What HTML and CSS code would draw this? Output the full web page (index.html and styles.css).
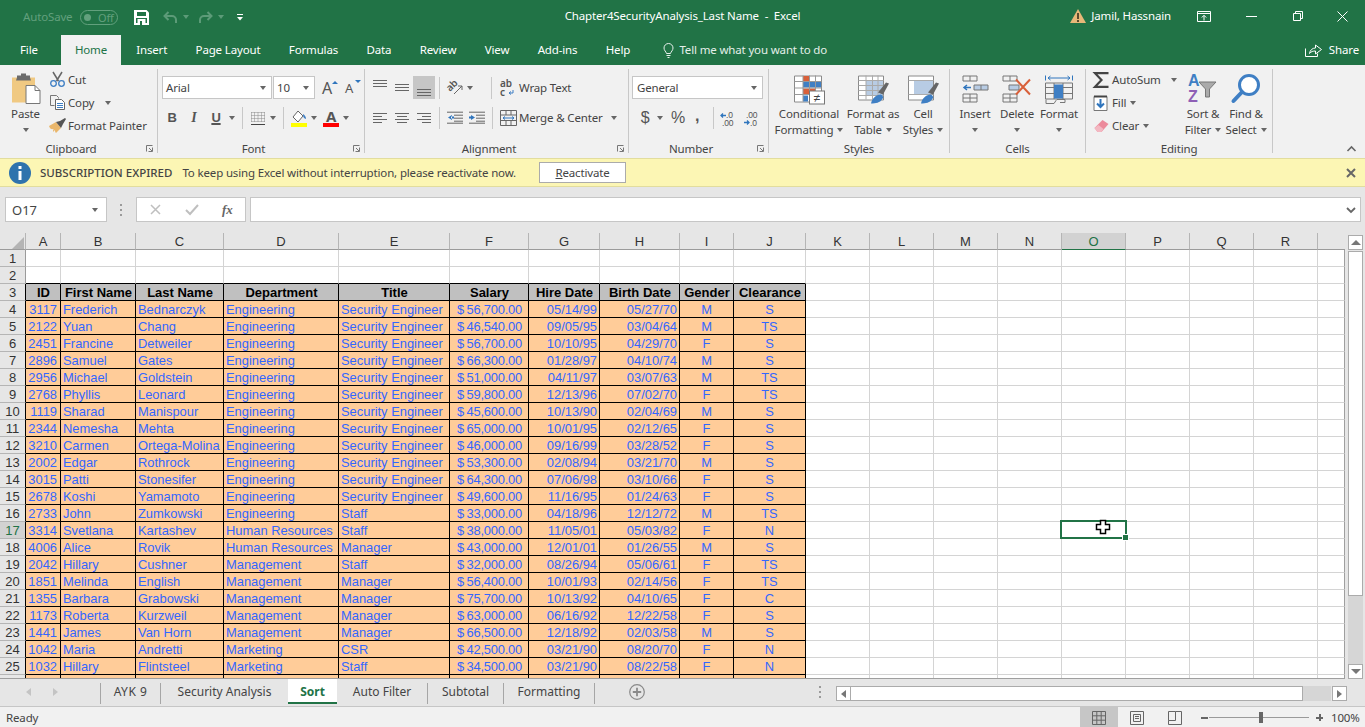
FILE: index.html
```html
<!DOCTYPE html>
<html lang="en">
<head>
<meta charset="utf-8">
<title>Chapter4SecurityAnalysis_Last Name - Excel</title>
<link rel="stylesheet" href="styles.css">
</head>
<body>
<header class="titlebar">
  <div class="qat">
    <span class="autosave">AutoSave</span>
    <span class="toggle"><i></i>Off</span>
    <svg class="ic-save" width="15" height="15" viewBox="0 0 15 15"><path d="M0 0h12.500L15 2.500V15H0z" fill="#fff"/><rect x="3" y="2" width="9" height="4" fill="#217346"/><rect x="2" y="8" width="11" height="5" fill="#217346"/><rect x="3.500" y="9" width="8" height="6" fill="#fff"/><rect x="6" y="11" width="2" height="4" fill="#217346"/></svg>
    <svg class="ic-undo" width="15" height="13" viewBox="0 0 15 13"><path d="M5.500 1 1.500 5l4 4M2 5h7a4 4 0 0 1 4 4v3" fill="none" stroke="#5c9b78" stroke-width="2"/></svg>
    <i class="caret dim m-c1"></i>
    <svg class="ic-redo" width="15" height="13" viewBox="0 0 15 13"><path d="M9.500 1l4 4-4 4M13 5H6a4 4 0 0 0-4 4v3" fill="none" stroke="#5c9b78" stroke-width="2"/></svg>
    <i class="caret dim m-c1"></i>
    <svg class="ic-qat" width="8" height="8" viewBox="0 0 8 8"><path d="M1 1.500h6" stroke="#fff"/><path d="M1 4h6L4 7.500z" fill="#fff"/></svg>
  </div>
  <div class="doc-title">Chapter4SecurityAnalysis_Last Name &nbsp;-&nbsp; Excel</div>
  <div class="win">
    <svg class="ic-warn" width="16" height="14" viewBox="0 0 16 14"><path d="M8 0l8 14H0z" fill="#e8b878"/><path d="M7 4h2v6H7zM7 11h2v2H7z" fill="#5b4a2c"/></svg>
    <span class="user">Jamil, Hassnain</span>
    <svg class="ic-disp" width="14" height="11" viewBox="0 0 14 11"><path d="M.5.500h13v10H.500zM.5 2.500h13" fill="none" stroke="#fff"/><path d="M7 9.500V4.500M4.800 6.500 7 4.300l2.200 2.200" fill="none" stroke="#fff"/></svg>
    <svg class="ic-min" width="11" height="1" viewBox="0 0 11 1"><path d="M0 .5h11" stroke="#fff"/></svg>
    <svg class="ic-res" width="10" height="10" viewBox="0 0 10 10"><path d="M.5 2.500h7v7h-7zM2.500 2.500v-2h7v7h-2" fill="none" stroke="#fff"/></svg>
    <svg class="ic-close" width="11" height="11" viewBox="0 0 11 11"><path d="M.5.500l10 10M10.500.500l-10 10" stroke="#fff"/></svg>
  </div>
</header>

<nav class="tabs">
  <span class="tab file">File</span>
  <span class="tab home">Home</span>
  <span class="tab">Insert</span>
  <span class="tab">Page Layout</span>
  <span class="tab">Formulas</span>
  <span class="tab">Data</span>
  <span class="tab">Review</span>
  <span class="tab">View</span>
  <span class="tab">Add-ins</span>
  <span class="tab">Help</span>
  <span class="tellme">
    <svg width="11" height="15" viewBox="0 0 11 15"><path d="M3.500 10.500C3 8.500 1 7.500 1 5a4.500 4.500 0 0 1 9 0c0 2.500-2 3.500-2.500 5.500zM3.500 12.500h4M4.500 14.500h2" fill="none" stroke="#e8f1ec"/></svg>
    Tell me what you want to do
  </span>
  <span class="share">
    <svg width="17" height="13" viewBox="0 0 17 13"><path d="M.5 4.500v8h12v-3" fill="none" stroke="#fff"/><path d="M4.500 9.500C5 6 7.500 4 10.500 4V1l6 4.500-6 4.500V7C8 7 6 7.500 4.500 9.500z" fill="none" stroke="#fff"/></svg>
    Share
  </span>
</nav>

<section class="ribbon">
  <div class="group g-clip">
    <div class="body">
      <div class="big paste">
        <svg class="bigic" width="30" height="31" viewBox="0 0 30 31"><path d="M1 4h23v25H1z" fill="#f0c982"/><path d="M6 4V2h4V0h5v2h4v2l1 3H5z" fill="#6b6b6b"/><path d="M15 12h9l5 5v13H15z" fill="#fff" stroke="#777"/><path d="M24 12v5h5" fill="none" stroke="#777"/></svg>
        <span>Paste</span><i class="caret"></i>
      </div>
      <div class="smalls">
        <div class="srow"><svg width="15" height="15" viewBox="0 0 15 15"><path d="M3 0l5.500 9M12 0L6.500 9" stroke="#666" stroke-width="1.500" fill="none"/><circle cx="3.500" cy="11.500" r="2.800" fill="none" stroke="#3f7fc4" stroke-width="1.300"/><circle cx="11.500" cy="11.500" r="2.800" fill="none" stroke="#3f7fc4" stroke-width="1.300"/></svg><span>Cut</span></div>
        <div class="srow"><svg width="15" height="15" viewBox="0 0 15 15"><path d="M.5.500h6l2 2v1M.5.500v10h4" fill="none" stroke="#777"/><path d="M5.500 4.500h6l3 3v7h-9z" fill="#fff" stroke="#666"/><path d="M7 8.500h6M7 10.500h6M7 12.500h6" stroke="#3f7fc4"/></svg><span>Copy</span><i class="caret m-copy"></i></div>
        <div class="srow"><svg width="17" height="15" viewBox="0 0 17 15"><path d="M0 8l7-4 5 6-5 5c-1-1-1-2-1-3l-2 2c0-1 0-2 .5-3-2 .5-3.500 0-4.500-3z" fill="#eab76c"/><path d="M7 4l4-1 5-3 1 1-3 5-2 4z" fill="#555"/></svg><span>Format Painter</span></div>
      </div>
    </div>
    <div class="label">Clipboard</div>
    <svg class="launch" width="7" height="7" viewBox="0 0 7 7"><path d="M.5 6.500v-6h6M6.500 2.500v4h-4M3 3l3 3" fill="none" stroke="#777"/></svg>
  </div>

  <div class="group g-font">
    <div class="body col">
      <div class="row r1">
        <span class="select s-font">Arial<i class="caret"></i></span>
        <span class="select s-size">10<i class="caret"></i></span>
        <span class="grow up">A<i></i></span>
        <span class="grow down">A<i></i></span>
      </div>
      <div class="row r2">
        <b class="fb">B</b><em class="fb">I</em><u class="fb">U</u><i class="caret m2"></i>
        <i class="sep m7"></i>
        <svg class="m8" width="14" height="13" viewBox="0 0 14 13"><path d="M.5.500h13M.5 6.500h13M.5 3.500h13M.5 9.500h13M.5.500v9M3.500.500v9M7 .500v9M10.500.500v9M13.500.500v9" stroke="#8a8a8a" stroke-dasharray="1 1" fill="none"/><path d="M0 12.500h14" stroke="#444"/></svg>
        <i class="caret m5"></i>
        <i class="sep m7"></i>
        <svg class="m7" width="16" height="18" viewBox="0 0 16 18"><path d="M2 8l5-6 5 5-5 6z" fill="#fff" stroke="#666"/><path d="M12 5c2 1 3 3 3 5-1.500-.5-3-1-3-5z" fill="#3f7fc4"/><rect y="14" width="16" height="4" fill="#ffff00"/></svg>
        <i class="caret m4"></i>
        <span class="fcolor m6">A<i></i></span>
        <i class="caret m4"></i>
      </div>
    </div>
    <div class="label">Font</div>
    <svg class="launch" width="7" height="7" viewBox="0 0 7 7"><path d="M.5 6.500v-6h6M6.500 2.500v4h-4M3 3l3 3" fill="none" stroke="#777"/></svg>
  </div>

  <div class="group g-align">
    <div class="body col">
      <div class="row r1">
        <svg class="m0" width="14" height="23" viewBox="0 0 14 23"><path d="M0 4.500h14M0 7.500h14M0 10.500h14" stroke="#666"/></svg>
        <svg class="m8" width="14" height="23" viewBox="0 0 14 23"><path d="M0 8.500h14M0 11.500h14M0 14.500h14" stroke="#666"/></svg>
        <span class="pressed"><svg width="14" height="23" viewBox="0 0 14 23"><path d="M0 13.500h14M0 16.500h14M0 19.500h14" stroke="#666"/></svg></span>
        <i class="sep m4"></i>
        <svg class="m7" width="17" height="18" viewBox="0 0 17 18"><text x="0" y="10" class="svgt" transform="rotate(-45 5 8)">ab</text><path d="M7 15 15 7M15 7v4M15 7h-4" stroke="#666" fill="none"/></svg>
        <i class="caret m3"></i>
        <i class="sep m18"></i>
        <svg class="m8" width="16" height="18" viewBox="0 0 16 18"><text x="0" y="8" class="svgt">ab</text><text x="0" y="17" class="svgt">c</text><path d="M13 11v3H9M11 12.500 9 14l2 1.500" fill="none" stroke="#3f7fc4"/></svg>
        <span class="txt m3">Wrap Text</span>
      </div>
      <div class="row r2">
        <svg class="m0" width="14" height="12" viewBox="0 0 14 12"><path d="M0 1.500h14M0 4.500h9M0 7.500h14M0 10.500h9" stroke="#666"/></svg>
        <svg class="m8" width="14" height="12" viewBox="0 0 14 12"><path d="M0 1.500h14M2 4.500h10M0 7.500h14M2 10.500h10" stroke="#666"/></svg>
        <svg class="m8" width="14" height="12" viewBox="0 0 14 12"><path d="M0 1.500h14M5 4.500h9M0 7.500h14M5 10.500h9" stroke="#666"/></svg>
        <i class="sep m8"></i>
        <svg class="m7" width="16" height="12" viewBox="0 0 16 12"><path d="M0 .5h16M7 3.500h9M7 6.500h9M7 9.500h9M0 11.500h16" stroke="#666" transform="translate(0 -.3)"/><path d="M5 3 1 5.500 5 8zM4 4.500h3v2H4z" fill="#2f75bd"/></svg>
        <svg class="m6" width="16" height="12" viewBox="0 0 16 12"><path d="M0 .5h16M7 3.500h9M7 6.500h9M7 9.500h9M0 11.500h16" stroke="#666" transform="translate(0 -.3)"/><path d="M2 3l4 2.500L2 8zM0 4.500h3v2H0z" fill="#2f75bd"/></svg>
        <i class="sep m7"></i>
        <svg class="m7" width="17" height="16" viewBox="0 0 17 16"><path d="M.5.500h16v15H.500zM.5 5h16M.5 10.500h16M6 .500V5M11 .500V5M6 10.500v5M11 10.500v5" fill="none" stroke="#666"/><path d="M3 8h11M3 8l2-1.500M3 8l2 1.500M14 8l-2-1.500M14 8l-2 1.500" fill="none" stroke="#2f75bd"/></svg>
        <span class="txt m2">Merge &amp; Center</span>
        <i class="caret m8"></i>
      </div>
    </div>
    <div class="label">Alignment</div>
    <svg class="launch" width="7" height="7" viewBox="0 0 7 7"><path d="M.5 6.500v-6h6M6.500 2.500v4h-4M3 3l3 3" fill="none" stroke="#777"/></svg>
  </div>

  <div class="group g-num">
    <div class="body col">
      <div class="row r1"><span class="select s-num">General<i class="caret"></i></span></div>
      <div class="row r2">
        <span class="sym dollar">$</span><i class="caret m7"></i>
        <span class="sym pct">%</span>
        <span class="sym comma">,</span>
        <i class="sep m12"></i>
        <svg class="m7" width="15" height="15" viewBox="0 0 15 15"><text x="5" y="7" class="svgn">.0</text><text x="1" y="15" class="svgn">.00</text><path d="M5 4.500H0M2 2.500l-2 2 2 2" fill="none" stroke="#2f75bd" stroke-width="1.300"/></svg>
        <svg class="m7" width="15" height="15" viewBox="0 0 15 15"><text x="3" y="7" class="svgn">.00</text><text x="7" y="15" class="svgn">.0</text><path d="M1 11.500h5M4 9.500l2 2-2 2" fill="none" stroke="#2f75bd" stroke-width="1.300"/></svg>
      </div>
    </div>
    <div class="label">Number</div>
    <svg class="launch" width="7" height="7" viewBox="0 0 7 7"><path d="M.5 6.500v-6h6M6.500 2.500v4h-4M3 3l3 3" fill="none" stroke="#777"/></svg>
  </div>

  <div class="group g-styles">
    <div class="body">
      <div class="big b-cond">
        <svg class="bigic" width="31" height="31" viewBox="0 0 31 31"><path d="M.5 2.500h27v26H.500z" fill="#fff" stroke="#8a8a8a"/><path d="M9 2.500h6v6H9z" fill="#d9603a"/><path d="M9 8h18v6H9z" fill="#3f7fc4"/><path d="M9 15h12v6H9z" fill="#d9603a"/><path d="M9 22h5v6H9z" fill="#3f7fc4"/><path d="M.5 8h27M.5 14.500h27M.5 21h27M9 2v26M15.500 2v26M21.500 2v26" stroke="#999" fill="none"/><rect x="15.500" y="17.500" width="15" height="13" fill="#fff" stroke="#777"/><text x="23" y="28" class="svgne">≠</text></svg>
        <span>Conditional</span><span>Formatting<i class="caret c-in"></i></span>
      </div>
      <div class="big b-table">
        <svg class="bigic" width="31" height="31" viewBox="0 0 31 31"><path d="M.5 2.500h25v24H.500z" fill="#fff" stroke="#8a8a8a"/><path d="M8 7h17v15H8z" fill="#b8cce4"/><path d="M.5 7h25M.5 12h25M.5 17h25M.5 22h25M8 2v24M14.500 2v24M20 2v24" stroke="#aaa" fill="none"/><path d="M20 19l8-10 3 1-6 11z" fill="#666"/><path d="M13 30c1-5 5-9 10-9 2 1 3 3 1 5-2 3-6 4-11 4z" fill="#3f7fc4"/></svg>
        <span>Format as</span><span>Table<i class="caret c-in"></i></span>
      </div>
      <div class="big b-cell">
        <svg class="bigic" width="31" height="31" viewBox="0 0 31 31"><path d="M.5 2.500h25v24H.500z" fill="#fff" stroke="#8a8a8a"/><path d="M6 7h19v14H6z" fill="#b8cce4"/><path d="M.5 7h25M.5 21h25" stroke="#aaa" fill="none"/><path d="M20 19l8-10 3 1-6 11z" fill="#666"/><path d="M13 30c1-5 5-9 10-9 2 1 3 3 1 5-2 3-6 4-11 4z" fill="#3f7fc4"/></svg>
        <span>Cell</span><span>Styles<i class="caret c-in"></i></span>
      </div>
    </div>
    <div class="label">Styles</div>
  </div>

  <div class="group g-cells">
    <div class="body">
      <div class="big">
        <svg class="bigic" width="27" height="27" viewBox="0 0 27 27"><path d="M1 .5h14v5H1zM8 .5v5M1 18.500h14v8H1zM1 22.500h14M8 18.500v8" fill="none" stroke="#777"/><path d="M12 9.500h14v5H12z" fill="#b8cce4" stroke="#777"/><path d="M19 9.500v5" stroke="#777"/><path d="M9 12H2M5 9.500 2 12l3 2.500" fill="none" stroke="#2f75bd" stroke-width="1.500"/></svg>
        <span>Insert</span><i class="caret"></i>
      </div>
      <div class="big">
        <svg class="bigic" width="30" height="27" viewBox="0 0 30 27"><path d="M1 .5h14v5H1zM8 .5v5M1 18.500h14v8H1zM1 22.500h14M8 18.500v8" fill="none" stroke="#777"/><path d="M7 9.500h10v5H7z" fill="#b8cce4" stroke="#777"/><path d="M14 4l14 15M28 4 14 19" stroke="#d9603a" stroke-width="2"/></svg>
        <span>Delete</span><i class="caret"></i>
      </div>
      <div class="big">
        <svg class="bigic" width="28" height="29" viewBox="0 0 28 29"><path d="M.5 1v5M27.500 1v5M3 3.500h22M3 3.500l2.500-2M3 3.500l2.500 2M25 3.500l-2.500-2M25 3.500l-2.500 2" fill="none" stroke="#2f75bd"/><path d="M.5 8.500h27v16H.500zM.5 13h27M.5 19h27M9 8.500v16M18 8.500v16" fill="none" stroke="#777"/><rect x="9" y="10" width="9" height="14" fill="#3f7fc4"/><path d="M1 25v4h8l2-3 1-1M12 25h8v3h-5" fill="none" stroke="#777"/></svg>
        <span>Format</span><i class="caret"></i>
      </div>
    </div>
    <div class="label">Cells</div>
  </div>

  <div class="group g-edit">
    <div class="body">
      <div class="smalls editcol">
        <div class="srow"><svg width="16" height="16" viewBox="0 0 16 16"><path d="M15 1.200H1.500L8 8l-6.500 6.800H15" fill="none" stroke="#444" stroke-width="2.200"/></svg><span>AutoSum</span><i class="caret m8"></i></div>
        <div class="srow"><svg width="16" height="16" viewBox="0 0 16 16"><path d="M.5 1.500h13v14H.500z" fill="#fff" stroke="#777"/><path d="M.5 1.500h13" stroke="#444" stroke-width="2"/><path d="M7 4v8M3.500 8.500 7 12l3.500-3.500" fill="none" stroke="#2f75bd" stroke-width="2"/></svg><span>Fill</span><i class="caret"></i></div>
        <div class="srow"><svg width="16" height="14" viewBox="0 0 16 14"><path d="M1 9l8-8 6 4-7 8H4z" fill="#ec8a9b"/><path d="M1 9l3 4h4l2-3-5-4z" fill="#f3b8c2"/></svg><span>Clear</span><i class="caret"></i></div>
      </div>
      <div class="big b-sort">
        <svg class="bigic" width="32" height="32" viewBox="0 0 32 32"><text x="1" y="13" class="svga">A</text><text x="1" y="29" class="svgz">Z</text><path d="M12 9h17l-6.500 7v8h-4v-8z" fill="#aaa" stroke="#777"/></svg>
        <span>Sort &amp;</span><span>Filter<i class="caret c-in"></i></span>
      </div>
      <div class="big b-find">
        <svg class="bigic" width="30" height="32" viewBox="0 0 30 32"><circle cx="18" cy="12" r="9.500" fill="#fff" stroke="#3f7fc4" stroke-width="3"/><path d="M11 19 2.500 28" stroke="#3f7fc4" stroke-width="4" stroke-linecap="round"/></svg>
        <span>Find &amp;</span><span>Select<i class="caret c-in"></i></span>
      </div>
    </div>
    <div class="label">Editing</div>
  </div>
  <svg class="collapse" width="9" height="6" viewBox="0 0 9 6"><path d="M.5 5 4.500 1l4 4" fill="none" stroke="#666" stroke-width="1.600"/></svg>
</section>

<section class="notice">
  <svg width="22" height="22" viewBox="0 0 22 22"><circle cx="11" cy="11" r="11" fill="#2f73ad"/><path d="M9.500 9h3v9h-3zM9.500 4h3v3h-3z" fill="#fff"/></svg>
  <strong>SUBSCRIPTION EXPIRED</strong>
  <span class="msg">To keep using Excel without interruption, please reactivate now.</span>
  <span class="react"><u>R</u>eactivate</span>
  <svg class="nclose" width="10" height="10" viewBox="0 0 10 10"><path d="M1 1l8 8M9 1 1 9" stroke="#666" stroke-width="2"/></svg>
</section>

<section class="fbar">
  <span class="namebox">O17<i class="caret"></i></span>
  <span class="grip"></span>
  <span class="fbtns">
    <svg width="11" height="11" viewBox="0 0 11 11"><path d="M1 1l9 9M10 1l-9 9" stroke="#bfbfbf" stroke-width="1.500"/></svg>
    <svg class="ok" width="14" height="11" viewBox="0 0 14 11"><path d="M1 6l4 4 8-9" fill="none" stroke="#bfbfbf" stroke-width="2"/></svg>
    <em class="fx">fx</em>
  </span>
  <span class="finput"><svg width="10" height="6" viewBox="0 0 10 6"><path d="M1 1l4 4 4-4" fill="none" stroke="#666" stroke-width="1.800"/></svg></span>
</section>

<main class="work">
  <div class="sheet">
    <table>
      <colgroup>
        <col class="c0"><col class="ca"><col class="cb"><col class="cc"><col class="cd"><col class="ce"><col class="cf"><col class="cg"><col class="ch"><col class="ci"><col class="cj">
        <col class="cx"><col class="cx"><col class="cx"><col class="cx"><col class="cx"><col class="cx"><col class="cx"><col class="cx"><col class="cs">
      </colgroup>
      <thead>
        <tr class="heads"><th class="corner"><svg width="12" height="12" viewBox="0 0 12 12"><path d="M12 0v12H0z" fill="#b4b4b4"/></svg></th><th>A</th><th>B</th><th>C</th><th>D</th><th>E</th><th>F</th><th>G</th><th>H</th><th>I</th><th>J</th><th>K</th><th>L</th><th>M</th><th>N</th><th class="sel">O</th><th>P</th><th>Q</th><th>R</th><th class="last"></th></tr>
      </thead>
      <tbody>
        <tr class="empty"><th>1</th><td></td><td></td><td></td><td></td><td></td><td></td><td></td><td></td><td></td><td></td><td class="blank" colspan="9"></td></tr>
        <tr class="empty above"><th>2</th><td></td><td></td><td></td><td></td><td></td><td></td><td></td><td></td><td></td><td></td><td class="blank" colspan="9"></td></tr>
        <tr class="titles"><th>3</th><td>ID</td><td>First Name</td><td>Last Name</td><td>Department</td><td>Title</td><td>Salary</td><td>Hire Date</td><td>Birth Date</td><td>Gender</td><td>Clearance</td><td class="blank" colspan="9"></td></tr>
        <tr class="data"><th>4</th><td>3117</td><td>Frederich</td><td>Bednarczyk</td><td>Engineering</td><td>Security Engineer</td><td>$ 56,700.00</td><td>05/14/99</td><td>05/27/70</td><td>M</td><td>S</td><td class="blank" colspan="9"></td></tr>
        <tr class="data"><th>5</th><td>2122</td><td>Yuan</td><td>Chang</td><td>Engineering</td><td>Security Engineer</td><td>$ 46,540.00</td><td>09/05/95</td><td>03/04/64</td><td>M</td><td>TS</td><td class="blank" colspan="9"></td></tr>
        <tr class="data"><th>6</th><td>2451</td><td>Francine</td><td>Detweiler</td><td>Engineering</td><td>Security Engineer</td><td>$ 56,700.00</td><td>10/10/95</td><td>04/29/70</td><td>F</td><td>S</td><td class="blank" colspan="9"></td></tr>
        <tr class="data"><th>7</th><td>2896</td><td>Samuel</td><td>Gates</td><td>Engineering</td><td>Security Engineer</td><td>$ 66,300.00</td><td>01/28/97</td><td>04/10/74</td><td>M</td><td>S</td><td class="blank" colspan="9"></td></tr>
        <tr class="data"><th>8</th><td>2956</td><td>Michael</td><td>Goldstein</td><td>Engineering</td><td>Security Engineer</td><td>$ 51,000.00</td><td>04/11/97</td><td>03/07/63</td><td>M</td><td>TS</td><td class="blank" colspan="9"></td></tr>
        <tr class="data"><th>9</th><td>2768</td><td>Phyllis</td><td>Leonard</td><td>Engineering</td><td>Security Engineer</td><td>$ 59,800.00</td><td>12/13/96</td><td>07/02/70</td><td>F</td><td>TS</td><td class="blank" colspan="9"></td></tr>
        <tr class="data"><th>10</th><td>1119</td><td>Sharad</td><td>Manispour</td><td>Engineering</td><td>Security Engineer</td><td>$ 45,600.00</td><td>10/13/90</td><td>02/04/69</td><td>M</td><td>S</td><td class="blank" colspan="9"></td></tr>
        <tr class="data"><th>11</th><td>2344</td><td>Nemesha</td><td>Mehta</td><td>Engineering</td><td>Security Engineer</td><td>$ 65,000.00</td><td>10/01/95</td><td>02/12/65</td><td>F</td><td>S</td><td class="blank" colspan="9"></td></tr>
        <tr class="data"><th>12</th><td>3210</td><td>Carmen</td><td>Ortega-Molina</td><td>Engineering</td><td>Security Engineer</td><td>$ 46,000.00</td><td>09/16/99</td><td>03/28/52</td><td>F</td><td>S</td><td class="blank" colspan="9"></td></tr>
        <tr class="data"><th>13</th><td>2002</td><td>Edgar</td><td>Rothrock</td><td>Engineering</td><td>Security Engineer</td><td>$ 53,300.00</td><td>02/08/94</td><td>03/21/70</td><td>M</td><td>S</td><td class="blank" colspan="9"></td></tr>
        <tr class="data"><th>14</th><td>3015</td><td>Patti</td><td>Stonesifer</td><td>Engineering</td><td>Security Engineer</td><td>$ 64,300.00</td><td>07/06/98</td><td>03/10/66</td><td>F</td><td>S</td><td class="blank" colspan="9"></td></tr>
        <tr class="data"><th>15</th><td>2678</td><td>Koshi</td><td>Yamamoto</td><td>Engineering</td><td>Security Engineer</td><td>$ 49,600.00</td><td>11/16/95</td><td>01/24/63</td><td>F</td><td>S</td><td class="blank" colspan="9"></td></tr>
        <tr class="data"><th>16</th><td>2733</td><td>John</td><td>Zumkowski</td><td>Engineering</td><td>Staff</td><td>$ 33,000.00</td><td>04/18/96</td><td>12/12/72</td><td>M</td><td>TS</td><td class="blank" colspan="9"></td></tr>
        <tr class="data"><th class="sel">17</th><td>3314</td><td>Svetlana</td><td>Kartashev</td><td>Human Resources</td><td>Staff</td><td>$ 38,000.00</td><td>11/05/01</td><td>05/03/82</td><td>F</td><td>N</td><td class="blank" colspan="9"></td></tr>
        <tr class="data"><th>18</th><td>4006</td><td>Alice</td><td>Rovik</td><td>Human Resources</td><td>Manager</td><td>$ 43,000.00</td><td>12/01/01</td><td>01/26/55</td><td>M</td><td>S</td><td class="blank" colspan="9"></td></tr>
        <tr class="data"><th>19</th><td>2042</td><td>Hillary</td><td>Cushner</td><td>Management</td><td>Staff</td><td>$ 32,000.00</td><td>08/26/94</td><td>05/06/61</td><td>F</td><td>TS</td><td class="blank" colspan="9"></td></tr>
        <tr class="data"><th>20</th><td>1851</td><td>Melinda</td><td>English</td><td>Management</td><td>Manager</td><td>$ 56,400.00</td><td>10/01/93</td><td>02/14/56</td><td>F</td><td>TS</td><td class="blank" colspan="9"></td></tr>
        <tr class="data"><th>21</th><td>1355</td><td>Barbara</td><td>Grabowski</td><td>Management</td><td>Manager</td><td>$ 75,700.00</td><td>10/13/92</td><td>04/10/65</td><td>F</td><td>C</td><td class="blank" colspan="9"></td></tr>
        <tr class="data"><th>22</th><td>1173</td><td>Roberta</td><td>Kurzweil</td><td>Management</td><td>Manager</td><td>$ 63,000.00</td><td>06/16/92</td><td>12/22/58</td><td>F</td><td>S</td><td class="blank" colspan="9"></td></tr>
        <tr class="data"><th>23</th><td>1441</td><td>James</td><td>Van Horn</td><td>Management</td><td>Manager</td><td>$ 66,500.00</td><td>12/18/92</td><td>02/03/58</td><td>M</td><td>S</td><td class="blank" colspan="9"></td></tr>
        <tr class="data"><th>24</th><td>1042</td><td>Maria</td><td>Andretti</td><td>Marketing</td><td>CSR</td><td>$ 42,500.00</td><td>03/21/90</td><td>08/20/70</td><td>F</td><td>N</td><td class="blank" colspan="9"></td></tr>
        <tr class="data"><th>25</th><td>1032</td><td>Hillary</td><td>Flintsteel</td><td>Marketing</td><td>Staff</td><td>$ 34,500.00</td><td>03/21/90</td><td>08/22/58</td><td>F</td><td>N</td><td class="blank" colspan="9"></td></tr>
        <tr class="data"><th></th><td></td><td></td><td></td><td></td><td></td><td></td><td></td><td></td><td></td><td></td><td class="blank" colspan="9"></td></tr>
      </tbody>
    </table>
    <div class="selection"><i></i></div>
    <svg class="cursor" width="16" height="16" viewBox="0 0 16 16"><path d="M5.500 1.500h5v4h4v5h-4v4h-5v-4h-4v-5h4z" fill="#fff" stroke="#000" stroke-width="1.500"/></svg>
  </div>
  <aside class="vscroll">
    <span class="sbtn"><i class="tri-up"></i></span>
    <span class="vthumb"></span>
    <span class="vtrack"></span>
    <span class="sbtn"><i class="tri-down"></i></span>
  </aside>
</main>

<footer class="sheetbar">
  <span class="nav"><i class="tri-l"></i><i class="tri-r"></i></span>
  <span class="stab">AYK 9</span>
  <span class="stab">Security Analysis</span>
  <span class="stab active">Sort</span>
  <span class="stab plain">Auto Filter</span>
  <span class="stab">Subtotal</span>
  <span class="stab">Formatting</span>
  <span class="add"><svg width="16" height="16" viewBox="0 0 16 16"><circle cx="8" cy="8" r="7.300" fill="none" stroke="#8a8a8a" stroke-width="1.200"/><path d="M8 3.800v8.400M3.800 8h8.400" stroke="#8a8a8a" stroke-width="1.800"/></svg></span>
  <span class="grip hgrip"></span>
  <span class="hscroll">
    <span class="hbtn"><i class="tri-l dark"></i></span>
    <span class="hthumb"></span>
    <span class="htrack"></span>
    <span class="hbtn"><i class="tri-r dark"></i></span>
  </span>
</footer>

<footer class="status">
  <span class="ready">Ready</span>
  <span class="views">
    <span class="view on"><svg width="14" height="14" viewBox="0 0 14 14"><path d="M.5.500h13v13H.500zM.5 4.800h13M.5 9.200h13M4.800.500v13M9.200.500v13" fill="none" stroke="#666"/></svg></span>
    <span class="view"><svg width="14" height="14" viewBox="0 0 14 14"><path d="M.5.500h13v13H.500z" fill="none" stroke="#666"/><path d="M3.500 3.500h7v7h-7zM5 5.500h4M5 7.500h4" fill="none" stroke="#666"/></svg></span>
    <span class="view"><svg width="14" height="14" viewBox="0 0 14 14"><path d="M.5 9.500v4h13V.500H7.500v9H.500V.500h7" fill="none" stroke="#666"/></svg></span>
  </span>
  <span class="zoom">
    <span class="zminus"></span>
    <span class="zslider"><i></i></span>
    <span class="zplus"></span>
    <span class="zval">100%</span>
  </span>
</footer>
</body>
</html>
```
FILE: styles.css
```css
* { box-sizing: border-box; }
html, body { margin: 0; padding: 0; }
body {
  width: 1365px;
  height: 727px;
  overflow: hidden;
  background: #e6e6e6;
  color: #444;
  font: 11.500px/16px "Noto Sans", "Open Sans", sans-serif;
  letter-spacing: -.15px;
}
i { display: inline-block; font-style: normal; }
svg { display: block; flex: none; overflow: visible; }

.caret {
  width: 0;
  height: 0;
  border-left: 3.5px solid transparent;
  border-right: 3.5px solid transparent;
  border-top: 4px solid #666;
  flex: none;
}
.caret.dim { border-top-color: #5c9b78; }
.c-in { margin-left: 4px; vertical-align: 2px; }

.m0 { margin-left: 0; } .m2 { margin-left: 2px; } .m3 { margin-left: 3px; } .m4 { margin-left: 4px; }
.m5 { margin-left: 5px; } .m6 { margin-left: 6px; } .m7 { margin-left: 7px; } .m8 { margin-left: 8px; }
.m10 { margin-left: 10px; } .m12 { margin-left: 12px; } .m14 { margin-left: 14px; } .m18 { margin-left: 18px; }

/* title bar */
.titlebar {
  height: 35px;
  background: #217346;
  color: #fff;
  display: grid;
  grid-template-columns: 1fr auto 1fr;
  align-items: center;
  padding-bottom: 3px;
}
.qat { display: flex; align-items: center; padding-left: 23px; margin-top: 2px; }
.autosave { color: #62a07d; width: 57px; }
.toggle {
  width: 38px;
  height: 15px;
  border: 1px solid #62a07d;
  border-radius: 8px;
  color: #62a07d;
  font-size: 11px;
  line-height: 13px;
  display: flex;
  align-items: center;
  padding-left: 3px;
  gap: 7px;
}
.toggle i { width: 7px; height: 7px; border-radius: 50%; background: #62a07d; }
.ic-save { margin-left: 16px; }
.ic-undo { margin-left: 14px; }
.m-c1 { margin-left: 5px; }
.ic-redo { margin-left: 9px; }
.ic-qat { margin-left: 12px; }
.doc-title { color: #fff; }
.win { display: flex; align-items: center; justify-content: flex-end; }
.user { margin-left: 5px; }
.ic-disp { margin-left: 26px; }
.ic-min { margin-left: 35px; }
.ic-res { margin-left: 36px; }
.ic-close { margin-left: 34px; margin-right: 17px; }

/* tabs */
.tabs {
  height: 30px;
  background: #217346;
  color: #fff;
  display: flex;
  align-items: center;
  position: relative;
}
.tab { white-space: nowrap; padding: 0 14.200px; line-height: 30px; height: 30px; }
.tab.file { padding: 0 0 0 20px; width: 61px; }
.tab.home { background: #f1f1f1; color: #217346; padding: 0; width: 60px; margin-right: 1px; text-align: center; }
.tellme { display: flex; align-items: center; gap: 5px; margin-left: 19px; color: #e4efe9; }
.share { display: flex; align-items: center; gap: 7px; margin-left: auto; margin-right: 6px; color: #fff; }

/* ribbon */
.ribbon {
  height: 93px;
  background: #f1f1f1;
  display: flex;
  position: relative;
  align-items: flex-start;
}
.group {
  position: relative;
  height: 84px;
  margin-top: 4px;
  border-right: 1px solid #c8c8c8;
  display: flex;
  flex-direction: column;
}
.g-clip { width: 158px; } .g-font { width: 207px; } .g-align { width: 264px; }
.g-num { width: 140px; } .g-styles { width: 181px; } .g-cells { width: 136px; } .g-edit { width: 187px; }
.body { height: 71px; flex: none; display: flex; }
.body.col { flex-direction: column; padding-top: 7px; }
.label { height: 18px; flex: none; line-height: 18px; text-align: center; color: #444; white-space: nowrap; }
.g-clip .label, .g-font .label, .g-align .label, .g-num .label { padding-right: 15px; }
.launch { position: absolute; right: 4px; bottom: 1px; }
.collapse { position: absolute; left: 1347px; top: 81px; }

.big { display: flex; flex-direction: column; align-items: center; text-align: center; white-space: nowrap; line-height: 16px; }
.bigic { height: 34px; }
.big > .caret { margin-top: 6px; }

.g-clip .body, .g-styles .body, .g-cells .body, .g-edit .body { padding-top: 3px; }
.paste { width: 33px; margin-left: 9px; }
.smalls { margin-left: 7px; margin-top: -4px; display: flex; flex-direction: column; }
.srow { height: 23px; display: flex; align-items: center; gap: 2px; white-space: nowrap; }
.srow svg { width: 17px; }
.srow .caret { margin-left: 2px; }
.srow .caret.m8 { margin-left: 8px; }
.srow .caret.m-copy { margin-left: 9px; }

.row { display: flex; align-items: center; white-space: nowrap; }
.r1 { height: 23px; flex: none; }
.r2 { height: 22px; flex: none; margin-top: 8px; }
.sep { width: 1px; height: 22px; background: #c8c8c8; flex: none; }
.select {
  display: flex;
  align-items: center;
  justify-content: space-between;
  height: 23px;
  background: #fff;
  border: 1px solid #c6c6c6;
  padding: 0 5px 0 3px;
}
.g-font .r1 { padding-left: 4px; }
.s-font { width: 110px; }
.s-size { width: 42px; margin-left: 1px; padding-right: 5px; }
.grow { position: relative; font-size: 16px; color: #555; width: 14px; }
.grow i { position: absolute; right: -2px; width: 0; height: 0; border-left: 3px solid transparent; border-right: 3px solid transparent; }
.grow.up { margin-left: 7px; }
.grow.up i { top: 1px; border-bottom: 3px solid #2f75bd; }
.grow.down { margin-left: 9px; font-size: 13px; }
.grow.down i { top: 0; border-top: 3px solid #2f75bd; }
.g-font .r2 { padding-left: 3px; }
.fb { width: 22px; text-align: center; font-family: "Liberation Sans", sans-serif; font-size: 13px; color: #555; font-weight: 700; }
em.fb { font-family: "Liberation Serif", serif; font-weight: 700; font-size: 14px; }
u.fb { text-decoration-thickness: 2px; }
.fcolor { width: 16px; height: 18px; position: relative; font: 700 15px/14px "Noto Sans", sans-serif; text-align: center; color: #555; }
.fcolor i { position: absolute; left: 0; bottom: 0; width: 16px; height: 4px; background: #ff0000; }

.g-align .row { padding-left: 8px; }
.pressed { margin-left: 4px; width: 22px; height: 23px; background: #c6c6c6; display: flex; justify-content: center; }
.svgt { font: 600 10px "Noto Sans", sans-serif; fill: #555; }
.svgn { font: 400 8.500px "Liberation Sans", sans-serif; fill: #555; }
.svgne { font: 400 12px "Liberation Sans", sans-serif; fill: #444; text-anchor: middle; }
.svga { font: 700 16px "Liberation Sans", sans-serif; fill: #3f7fc4; }
.svgz { font: 700 16px "Liberation Sans", sans-serif; fill: #8e5fb5; }

.g-num .r1 { padding-left: 3px; }
.s-num { width: 131px; padding-left: 4px; padding-right: 5px; }
.g-num .r2 { padding-left: 11px; }
.sym { color: #555; font-family: "Liberation Sans", sans-serif; }
.dollar { font-size: 16px; width: 10px; text-align: center; }
.pct { font-size: 16px; margin-left: 8px; }
.comma { font-size: 16px; font-weight: 700; margin-left: 10px; margin-top: -5px; width: 6px; }

.g-styles .body { padding-left: 4px; }
.b-cond { width: 72px; } .b-table { width: 56px; } .b-cell { width: 44px; }
.g-cells .body { padding-left: 4px; }
.g-cells .big { width: 42px; }
.editcol { margin-left: 7px; width: 89px; }
.b-sort { width: 42px; } .b-find { width: 44px; }

/* notice */
.notice {
  height: 29px;
  background: #fcf6b4;
  border-top: 1px solid #e2dd9e;
  border-bottom: 1px solid #e2dd9e;
  display: flex;
  align-items: center;
  padding-left: 9px;
  position: relative;
}
.notice strong { margin-left: 9px; font-weight: 500; color: #444; letter-spacing: 0; }
.msg { margin-left: 10px; color: #444; }
.react { margin-left: 23px; width: 87px; height: 21px; background: #fff; border: 1px solid #ababab; text-align: center; line-height: 19px; }
.nclose { position: absolute; left: 1346px; top: 9px; }

/* formula bar */
.fbar { height: 46px; background: #e6e6e6; display: flex; align-items: flex-start; padding: 10px 4px 0 5px; }
.namebox {
  width: 102px; height: 25px; background: #fff; border: 1px solid #c6c6c6;
  display: flex; align-items: center; justify-content: space-between; padding: 0 8px 0 6px; font-size: 13px;
  letter-spacing: 0;
}
.grip { width: 2px; height: 12px; margin: 7px 0 0 13px; background: repeating-linear-gradient(to bottom, #9a9a9a 0 2px, transparent 2px 5px); flex: none; }
.fbtns {
  width: 110px; height: 25px; margin-left: 14px; background: #fff; border: 1px solid #c6c6c6;
  display: flex; align-items: center; padding-left: 13px;
}
.fbtns .ok { margin-left: 24px; }
.fx { margin-left: 23px; font: italic 700 13px "Liberation Serif", serif; color: #666; }
.finput {
  flex: 1; height: 25px; margin-left: 4px; background: #fff; border: 1px solid #c6c6c6;
  display: flex; align-items: center; justify-content: flex-end; padding-right: 4px;
}

/* sheet */
.work { height: 446px; display: flex; background: #e6e6e6; }
.sheet { width: 1345px; height: 446px; overflow: hidden; position: relative; border-bottom: 1px solid #9f9f9f; background: #fff; }
table { border-collapse: separate; border-spacing: 0; table-layout: fixed; width: 1345px; font: 13px/15px "Liberation Sans", Arial, sans-serif; letter-spacing: 0; }
.c0 { width: 26px; } .ca { width: 35px; } .cb { width: 75px; } .cc { width: 88px; } .cd { width: 115px; }
.ce { width: 111px; } .cf { width: 79px; } .cg { width: 71px; } .ch { width: 80px; } .ci { width: 54px; }
.cj { width: 72px; } .cx { width: 64px; } .cs { width: 27px; }
tr { height: 17px; }
th, td { padding: 1px 0 0; height: 17px; white-space: nowrap; overflow: hidden; }
th { font-weight: 400; color: #333; background: #e6e6e6; text-align: center; border-right: 1px solid #b5b5b5; border-bottom: 1px solid #b5b5b5; }
.heads th { border-bottom: 1px solid #9b9b9b; }
.heads th.last { border-right: 0; }
.corner svg { margin: 2px 0 0 12px; }
th.sel { background: #d2d2d2; color: #217346; }
.heads th.sel { border-bottom: 1px solid #217346; }
td { border-right: 1px solid #d4d4d4; border-bottom: 1px solid #d4d4d4; background: #fff; }
tbody th { border-right-color: #9b9b9b; }
.above td:not(.blank) { border-bottom-color: #000; }
.blank {
  border-right: 1px solid #9f9f9f;
  background: repeating-linear-gradient(to right, transparent 0 63px, #d4d4d4 63px 64px);
}
.titles td:not(.blank), .data td:not(.blank) { border-right-color: #000; border-bottom-color: #000; }
.titles th, .data th { border-right-color: #000; }
.titles td:not(.blank) { background: #c0c0c0; color: #000; font-weight: 700; text-align: center; padding-left: 1px; }
.data td:not(.blank) { background: #ffcc99; color: #3366ff; padding-left: 2px; font-size: 12.900px; }
.data td:nth-child(2) { text-align: right; padding-left: 0; padding-right: 3px; }
.data td:nth-child(7) { text-align: right; padding-left: 0; padding-right: 6px; word-spacing: -1px; letter-spacing: -.2px; }
.data td:nth-child(8), .data td:nth-child(9) { text-align: right; padding-left: 0; padding-right: 2px; }
.data td:nth-child(10), .data td:nth-child(11) { text-align: center; padding-left: 0; }

.selection { position: absolute; left: 1060px; top: 287px; width: 67px; height: 19px; border: 2px solid #217346; }
.selection i { position: absolute; right: -4px; bottom: -4px; width: 7px; height: 7px; background: #217346; border: 1px solid #fff; }
.cursor { position: absolute; left: 1095px; top: 286px; }

.vscroll { width: 20px; padding: 2px 2px 0 3px; display: flex; flex-direction: column; }
.sbtn { height: 15px; flex: none; background: #fff; border: 1px solid #ababab; display: flex; align-items: center; justify-content: center; }
.tri-up { border-left: 5px solid transparent; border-right: 5px solid transparent; border-bottom: 5px solid #777; }
.tri-down { border-left: 5px solid transparent; border-right: 5px solid transparent; border-top: 5px solid #777; }
.vthumb { height: 345px; flex: none; background: #fff; border: 1px solid #ababab; margin-top: 1px; }
.vtrack { flex: 1; background: #d6d6d6; }

/* sheet tabs */
.sheetbar {
  height: 28px; background: #e6e6e6; display: flex; align-items: flex-start;
  border-bottom: 1px solid #c6c6c6;
}
.nav { width: 100px; height: 24px; display: flex; align-items: center; padding-left: 26px; gap: 22px; margin-top: 1px; }
.tri-l { border-top: 4px solid transparent; border-bottom: 4px solid transparent; border-right: 5px solid #c4c4c4; }
.tri-r { border-top: 4px solid transparent; border-bottom: 4px solid transparent; border-left: 5px solid #c4c4c4; }
.tri-l.dark { border-right-color: #777; }
.tri-r.dark { border-left-color: #777; }
.stab {
  height: 21px; margin-top: 4px; padding: 0; line-height: 17px; white-space: nowrap; text-align: center;
  border-left: 1px solid #a6a6a6; color: #444; font-size: 12px; letter-spacing: 0;
}
.stab:nth-child(2) { width: 60px; letter-spacing: .5px; }
.stab:nth-child(3) { width: 128px; }
.stab.active {
  margin-top: 0; height: 25px; width: 49px; padding: 4px 0 0; background: #fff; color: #217346; font-weight: 700;
  border-left: 0; border-bottom: 2px solid #217346;
}
.stab.plain { border-left: 0; width: 90px; }
.stab:nth-child(6) { width: 76px; }
.stab:nth-child(7) { width: 92px; border-right: 1px solid #a6a6a6; }
.add { margin: 5px 0 0 34px; width: 16px; }
.hgrip { margin: 7px 0 0 174px; }
.hscroll { margin: 7px 0 0 15px; display: flex; height: 15px; width: 511px; }
.hbtn { width: 15px; height: 15px; flex: none; background: #fff; border: 1px solid #ababab; display: flex; align-items: center; justify-content: center; }
.hthumb { flex: none; width: 452px; background: #fff; border: 1px solid #ababab; border-left: 0; }
.htrack { flex: 1; background: #d6d6d6; margin-right: 1px; }

/* status bar */
.status { height: 21px; background: #f1f1f1; display: flex; align-items: center; position: relative; }
.ready { margin-left: 6px; }
.views { display: flex; margin-left: auto; height: 21px; }
.view { width: 38px; height: 21px; display: flex; align-items: center; justify-content: center; }
.view.on { background: #c6c6c6; }
.zoom { display: flex; align-items: center; margin-left: 7px; margin-right: 7px; }
.zminus { width: 7px; height: 2px; background: #666; }
.zslider { width: 100px; height: 1px; margin: 0 7px 0 1px; background: #9a9a9a; position: relative; }
.zslider i { position: absolute; left: 50px; top: -5px; width: 4px; height: 11px; background: #666; }
.zplus { width: 7px; height: 7px; background: linear-gradient(#666,#666) center/7px 2px no-repeat, linear-gradient(#666,#666) center/2px 7px no-repeat; }
.zval { margin-left: 8px; width: 27px; text-align: right; }
```
